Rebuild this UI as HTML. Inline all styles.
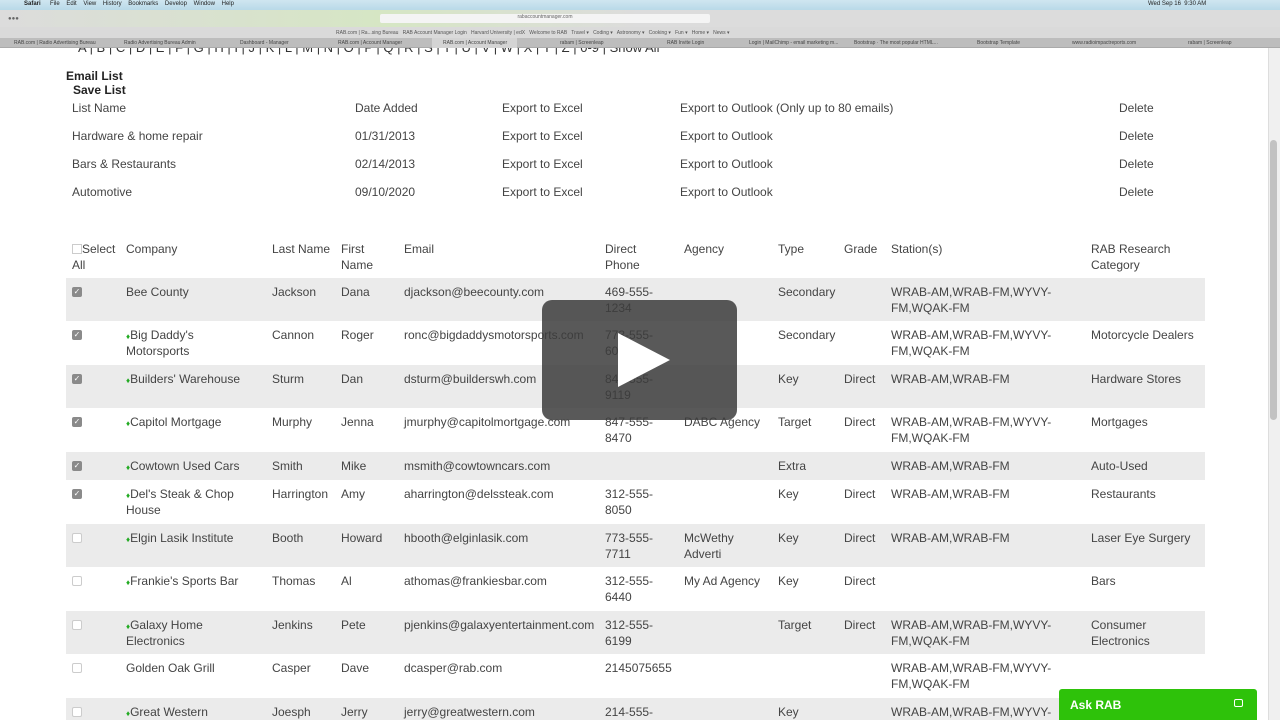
<!DOCTYPE html><html style="width:1280px;height:720px;overflow:hidden"><head><style>
*{margin:0;padding:0;box-sizing:border-box}
body{width:1280px;height:720px;overflow:hidden;background:#fff;font-family:"Liberation Sans",sans-serif;font-size:12px;color:#444;position:relative}
.a{position:absolute;white-space:nowrap}
.menu{position:absolute;left:0;top:0;width:1280px;height:10px;background:linear-gradient(#cfe6f0,#b9d9e8);font-size:6px;color:#222}
.tool{position:absolute;left:0;top:10px;width:1280px;height:17px;background:linear-gradient(90deg,#dcdcdc,#d6e6c4 30%,#dcdcdc 50%)}
.bm{position:absolute;left:0;top:27px;width:1280px;height:11px;background:#dadada;font-size:5px;color:#555}
.tabs{position:absolute;left:0;top:38px;width:1280px;height:10px;background:#bdbdbd;font-size:5px;color:#444;border-bottom:1px solid #aaa}
.row{position:absolute;left:66px;width:1139px}
.g{background:#ebebeb}
.dot{color:#2a2;font-size:8px;line-height:1}
</style></head><body>
<div class="menu"><span class="a" style="left:24px;top:1px;font-weight:bold">Safari</span><span class="a" style="left:50px;top:1px">File&nbsp;&nbsp;&nbsp; Edit&nbsp;&nbsp;&nbsp; View&nbsp;&nbsp;&nbsp; History&nbsp;&nbsp;&nbsp; Bookmarks&nbsp;&nbsp;&nbsp; Develop&nbsp;&nbsp;&nbsp; Window&nbsp;&nbsp;&nbsp; Help</span><span class="a" style="left:1148px;top:1px">Wed Sep 16&nbsp; 9:30 AM</span></div>
<div class="tool"><div class="a" style="left:380px;top:4px;width:330px;height:9px;background:#f4f4f4;border-radius:2px;font-size:5px;color:#666;text-align:center">rabaccountmanager.com</div><div class="a" style="left:8px;top:6px;width:22px;height:4px;font-size:6px;color:#666">●●●</div></div>
<div class="bm"><span class="a" style="left:336px;top:3px">RAB.com | Ra...sing Bureau &nbsp; RAB Account Manager Login &nbsp; Harvard University | edX &nbsp; Welcome to RAB &nbsp; Travel ▾ &nbsp; Coding ▾ &nbsp; Astronomy ▾ &nbsp; Cooking ▾ &nbsp; Fun ▾ &nbsp; Home ▾ &nbsp; News ▾</span></div>
<div class="tabs"><div class="a" style="left:432px;top:0;width:85px;height:10px;background:#d4d4d4"></div><span class="a" style="left:14px;top:2px">RAB.com | Radio Advertising Bureau</span><span class="a" style="left:124px;top:2px">Radio Advertising Bureau Admin</span><span class="a" style="left:240px;top:2px">Dashboard - Manager</span><span class="a" style="left:338px;top:2px">RAB.com | Account Manager</span><span class="a" style="left:443px;top:2px">RAB.com | Account Manager</span><span class="a" style="left:560px;top:2px">rabam | Screenleap</span><span class="a" style="left:667px;top:2px">RAB Invite Login</span><span class="a" style="left:749px;top:2px">Login | MailChimp - email marketing m...</span><span class="a" style="left:854px;top:2px">Bootstrap · The most popular HTML...</span><span class="a" style="left:977px;top:2px">Bootstrap Template</span><span class="a" style="left:1072px;top:2px">www.radioimpactreports.com</span><span class="a" style="left:1188px;top:2px">rabam | Screenleap</span></div>
<div style="position:absolute;left:0;top:48px;width:1280px;height:8px;overflow:hidden"><span class="a" style="left:78px;top:-8px;font-size:13px;color:#333">A | B | C | D | E | F | G | H | I | J | K | L | M | N | O | P | Q | R | S | T | U | V | W | X | Y | Z | 0-9 | Show All</span></div>
<div class="a" style="left:1268px;top:48px;width:12px;height:672px;background:#f0f0f0;border-left:1px solid #ddd"></div>
<div class="a" style="left:1270px;top:140px;width:7px;height:280px;background:#c2c2c2;border-radius:4px"></div>
<span class="a" style="left:66px;top:69px;font-size:12px;color:#222;font-weight:bold">Email List</span>
<span class="a" style="left:73px;top:83px;font-size:12px;color:#222;font-weight:bold">Save List</span>
<div class="a" style="left:72px;top:94px;line-height:28px">List Name<br>Hardware &amp; home repair<br>Bars &amp; Restaurants<br>Automotive</div>
<div class="a" style="left:355px;top:94px;line-height:28px">Date Added<br>01/31/2013<br>02/14/2013<br>09/10/2020</div>
<div class="a" style="left:502px;top:94px;line-height:28px">Export to Excel<br>Export to Excel<br>Export to Excel<br>Export to Excel</div>
<div class="a" style="left:680px;top:94px;line-height:28px">Export to Outlook (Only up to 80 emails)<br>Export to Outlook<br>Export to Outlook<br>Export to Outlook</div>
<div class="a" style="left:1119px;top:94px;line-height:28px">Delete<br>Delete<br>Delete<br>Delete</div>
<div style="position:absolute;left:0;top:241px;line-height:16px">
<span class="a" style="left:72px;top:0"><span style="display:inline-block;width:10px;height:10px;border:1px solid #ccc;vertical-align:-1px"></span>Select<br>All</span>
<span class="a" style="left:126px">Company</span><span class="a" style="left:272px">Last Name</span><span class="a" style="left:341px">First<br>Name</span><span class="a" style="left:404px">Email</span><span class="a" style="left:605px">Direct<br>Phone</span><span class="a" style="left:684px">Agency</span><span class="a" style="left:778px">Type</span><span class="a" style="left:844px">Grade</span><span class="a" style="left:891px">Station(s)</span><span class="a" style="left:1091px">RAB Research<br>Category</span>
</div>
<div id="t"></div>
<script>
const R=[
[278,43,1,1,0,"Bee County","Jackson","Dana","djackson@beecounty.com","469-555-<br>1234","","Secondary","","WRAB-AM,WRAB-FM,WYVY-<br>FM,WQAK-FM",""],
[321,44,0,1,1,"Big Daddy's<br>Motorsports","Cannon","Roger","ronc@bigdaddysmotorsports.com","773-555-<br>6000","","Secondary","","WRAB-AM,WRAB-FM,WYVY-<br>FM,WQAK-FM","Motorcycle Dealers"],
[365,43,1,1,1,"Builders' Warehouse","Sturm","Dan","dsturm@builderswh.com","847-555-<br>9119","","Key","Direct","WRAB-AM,WRAB-FM","Hardware Stores"],
[408,44,0,1,1,"Capitol Mortgage","Murphy","Jenna","jmurphy@capitolmortgage.com","847-555-<br>8470","DABC Agency","Target","Direct","WRAB-AM,WRAB-FM,WYVY-<br>FM,WQAK-FM","Mortgages"],
[452,28,1,1,1,"Cowtown Used Cars","Smith","Mike","msmith@cowtowncars.com","","","Extra","","WRAB-AM,WRAB-FM","Auto-Used"],
[480,44,0,1,1,"Del's Steak &amp; Chop<br>House","Harrington","Amy","aharrington@delssteak.com","312-555-<br>8050","","Key","Direct","WRAB-AM,WRAB-FM","Restaurants"],
[524,43,1,0,1,"Elgin Lasik Institute","Booth","Howard","hbooth@elginlasik.com","773-555-<br>7711","McWethy<br>Adverti","Key","Direct","WRAB-AM,WRAB-FM","Laser Eye Surgery"],
[567,44,0,0,1,"Frankie's Sports Bar","Thomas","Al","athomas@frankiesbar.com","312-555-<br>6440","My Ad Agency","Key","Direct","","Bars"],
[611,43,1,0,1,"Galaxy Home<br>Electronics","Jenkins","Pete","pjenkins@galaxyentertainment.com","312-555-<br>6199","","Target","Direct","WRAB-AM,WRAB-FM,WYVY-<br>FM,WQAK-FM","Consumer<br>Electronics"],
[654,44,0,0,0,"Golden Oak Grill","Casper","Dave","dcasper@rab.com","2145075655","","","","WRAB-AM,WRAB-FM,WYVY-<br>FM,WQAK-FM",""],
[698,22,1,0,1,"Great Western","Joesph","Jerry","jerry@greatwestern.com","214-555-","","Key","","WRAB-AM,WRAB-FM,WYVY-",""]];
const X=[126,272,341,404,605,684,778,844,891,1091];let h="";
for(const r of R){h+=`<div class="row ${r[2]?'g':''}" style="top:${r[0]}px;height:${r[1]}px"></div><div class="a" style="left:72px;top:${r[0]+9}px;width:10px;height:10px;border-radius:2px;font-size:8px;line-height:10px;text-align:center;color:#fff;${r[3]?'background:#8a8a8a':'border:1px solid #ccc;background:#fff'}">${r[3]?'✓':''}</div>`;
for(let i=0;i<10;i++){let v=r[5+i];if(i==0&&r[4])v='<span class="dot">♦</span>'+v;h+=`<div class="a" style="left:${X[i]}px;top:${r[0]+6}px;line-height:16px">${v}</div>`;}}
document.getElementById('t').innerHTML=h;
</script>
<div class="a" style="left:542px;top:300px;width:195px;height:120px;background:rgba(60,60,60,.85);border-radius:10px"><svg width="195" height="120" style="position:absolute;left:0;top:0"><polygon points="76,33 76,87 128,60" fill="#fff"/></svg></div>
<div class="a" style="left:1059px;top:689px;width:198px;height:31px;background:#2ec20a;border-radius:3px 3px 0 0;color:#fff;font-weight:bold;font-size:12px;padding:9px 11px">Ask RAB<span style="position:absolute;right:14px;top:10px;width:9px;height:8px;border:1.5px solid #fff;border-radius:2px"></span></div>
</body></html>
